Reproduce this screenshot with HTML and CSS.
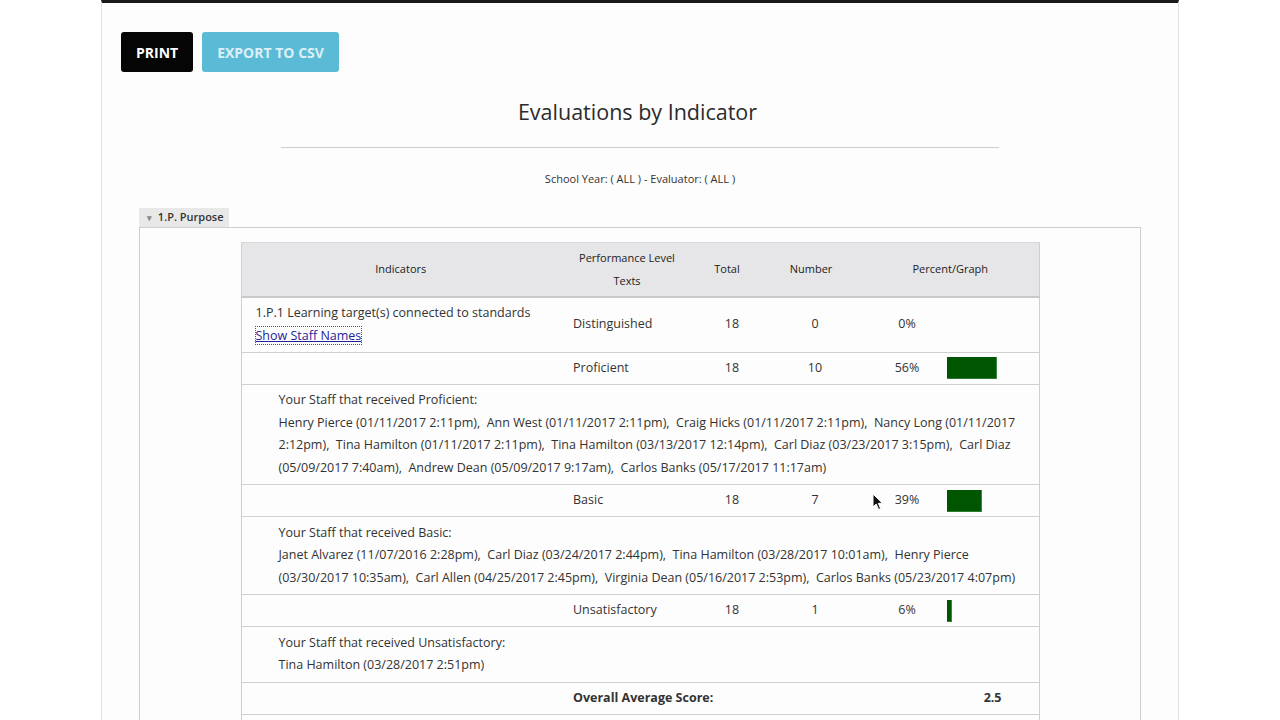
FILE: index.html
```html
<!DOCTYPE html>
<html lang="en">
<head>
<meta charset="utf-8">
<title>Evaluations by Indicator</title>
<link rel="stylesheet" href="styles.css">
</head>
<body>
<div class="page">
  <div class="actions">
    <button class="btn btn-print">PRINT</button>
    <button class="btn btn-export">EXPORT TO CSV</button>
  </div>
  <h1 class="title">Evaluations by Indicator</h1>
  <hr class="rule">
  <p class="filters">School Year: ( ALL ) - Evaluator: ( ALL )</p>

  <div class="group">
    <div class="group-tab"><span class="caret">&#9662;</span> 1.P. Purpose</div>
    <div class="group-body">
      <table class="report">
        <colgroup>
          <col class="c-ind"><col class="c-lvl"><col class="c-tot"><col class="c-num"><col class="c-pct">
        </colgroup>
        <thead>
          <tr>
            <th>Indicators</th>
            <th>Performance Level<br>Texts</th>
            <th>Total</th>
            <th>Number</th>
            <th>Percent/Graph</th>
          </tr>
        </thead>
        <tbody>
          <tr>
            <td class="ind">1.P.1 Learning target(s) connected to standards<br><a href="#" class="staff-link">Show Staff Names</a></td>
            <td class="lvl">Distinguished</td>
            <td class="tot">18</td>
            <td class="num">0</td>
            <td class="pct"><div class="pct-wrap"><span class="pct-val">0%</span></div></td>
          </tr>
          <tr>
            <td></td>
            <td class="lvl">Proficient</td>
            <td class="tot">18</td>
            <td class="num">10</td>
            <td class="pct"><div class="pct-wrap"><span class="pct-val">56%</span><span class="bar" style="width:50px"></span></div></td>
          </tr>
          <tr class="staff">
            <td colspan="5">Your Staff that received Proficient:<br>Henry Pierce (01/11/2017 2:11pm),&nbsp; Ann West (01/11/2017 2:11pm),&nbsp; Craig Hicks (01/11/2017 2:11pm),&nbsp; Nancy Long (01/11/2017 2:12pm),&nbsp; Tina Hamilton (01/11/2017 2:11pm),&nbsp; Tina Hamilton (03/13/2017 12:14pm),&nbsp; Carl Diaz (03/23/2017 3:15pm),&nbsp; Carl Diaz (05/09/2017 7:40am),&nbsp; Andrew Dean (05/09/2017 9:17am),&nbsp; Carlos Banks (05/17/2017 11:17am)</td>
          </tr>
          <tr>
            <td></td>
            <td class="lvl">Basic</td>
            <td class="tot">18</td>
            <td class="num">7</td>
            <td class="pct"><div class="pct-wrap"><span class="pct-val">39%</span><span class="bar" style="width:35px"></span></div></td>
          </tr>
          <tr class="staff">
            <td colspan="5">Your Staff that received Basic:<br>Janet Alvarez (11/07/2016 2:28pm),&nbsp; Carl Diaz (03/24/2017 2:44pm),&nbsp; Tina Hamilton (03/28/2017 10:01am),&nbsp; Henry Pierce (03/30/2017 10:35am),&nbsp; Carl Allen (04/25/2017 2:45pm),&nbsp; Virginia Dean (05/16/2017 2:53pm),&nbsp; Carlos Banks (05/23/2017 4:07pm)</td>
          </tr>
          <tr>
            <td></td>
            <td class="lvl">Unsatisfactory</td>
            <td class="tot">18</td>
            <td class="num">1</td>
            <td class="pct"><div class="pct-wrap"><span class="pct-val">6%</span><span class="bar" style="width:5px"></span></div></td>
          </tr>
          <tr class="staff">
            <td colspan="5">Your Staff that received Unsatisfactory:<br>Tina Hamilton (03/28/2017 2:51pm)</td>
          </tr>
          <tr class="overall">
            <td></td>
            <td colspan="3" class="lvl overall-label">Overall Average Score:</td>
            <td class="overall-val">2.5</td>
          </tr>
          <tr class="spacer">
            <td colspan="5"></td>
          </tr>
        </tbody>
      </table>
    </div>
  </div>
  <svg class="cursor" width="12" height="18" viewBox="0 0 12 18" aria-hidden="true">
    <path d="M1 1 L1 14 L4.2 11 L6.6 16.5 L8.6 15.6 L6.3 10.3 L10.5 10.3 Z" fill="#111" stroke="#fff" stroke-width="1"/>
  </svg>
</div>
</body>
</html>
```
FILE: styles.css
```css
* { box-sizing: border-box; }
html, body { margin: 0; padding: 0; }
body {
  background: #ffffff;
  font-family: "Open Sans", "Noto Sans", "Liberation Sans", sans-serif;
  color: #333;
}
.page {
  position: relative;
  width: 1078px;
  min-height: 720px;
  margin: 0 auto;
  background: #fdfdfd;
  border-top: 3px solid #1a1a1a;
  border-left: 1px solid #e2e2e2;
  border-right: 1px solid #e2e2e2;
  padding: 29px 0 0 19px;
}
.actions { display: flex; gap: 9px; }
.btn {
  height: 40px;
  border: none;
  border-radius: 3px;
  font-family: "Open Sans", "Liberation Sans", sans-serif;
  font-weight: 700;
  font-size: 14px;
  padding: 0 15px;
  cursor: pointer;
}
.btn-print { background: #050505; color: #fff; width: 72px; }
.btn-export { background: #5bbad5; color: #dcf0f7; width: 137px; }
.title {
  margin: 25px 0 0 -24px;
  text-align: center;
  font-weight: 400;
  font-size: 21.5px;
  line-height: 30px;
  color: #2b2b2b;
}
.rule {
  width: 718px;
  margin: 20px 0 0 160px;
  border: none;
  border-top: 1px solid #cfcfcf;
  height: 0;
}
.filters {
  margin: 23px 0 0 -19px;
  text-align: center;
  font-size: 11px;
  line-height: 16px;
  color: #333;
}
.group { margin: 17px 0 0 18px; width: 1002px; }
.group-tab {
  display: inline-block;
  background: #e8e8e8;
  font-size: 11px;
  font-weight: 600;
  line-height: 18px;
  padding: 0 5px 0 8px;
  color: #333;
}
.caret { color: #888; font-size: 9px; margin-right: 3px; }
.group-body {
  border: 1px solid #cfcfcf;
  border-bottom: none;
  padding-top: 14px;
  min-height: 500px;
}
.report {
  width: 798px;
  margin: 0 auto;
  border-collapse: collapse;
  table-layout: fixed;
  font-size: 12.5px;
  border-left: 1px solid #cfcfcf;
  border-right: 1px solid #cfcfcf;
}
.c-ind { width: 319px; }
.c-lvl { width: 134px; }
.c-tot { width: 66px; }
.c-num { width: 102px; }
.c-pct { width: 177px; }
.report thead th {
  background: #e6e6e8;
  font-size: 11px;
  font-weight: 500;
  line-height: 22.5px;
  padding: 4px 0 3.5px;
  color: #222;
  border-top: 1px solid #d8d8d8;
  border-bottom: 2px solid #c9c9c9;
  text-align: center;
}
.report td {
  line-height: 22.5px;
  padding: 4.25px 0 4.25px;
  border-bottom: 1px solid #d0d0d0;
  vertical-align: middle;
}
.report td.ind { padding-left: 14px; padding-top: 4.5px; padding-bottom: 4.5px; }
.staff-link {
  color: #1f1f99;
  text-decoration: underline;
  outline: 1px dotted #555;
}
.report td.lvl { padding-left: 13px; }
.report td.tot { text-align: center; padding-left: 10px; }
.report td.num { text-align: center; padding-left: 8px; }
.report td.pct { padding-left: 5px; }
.pct-wrap { display: flex; align-items: center; }
.pct-val { width: 80px; text-align: center; }
.bar {
  display: block;
  height: 22px;
  background: #005600;
  border-right: 1px solid #3a8a3a;
  border-bottom: 1px solid #2f7d2f;
}
.staff td { padding: 4.75px 20px 4.75px 37px; }
.overall-label { font-weight: 700; }
.overall-val { font-weight: 700; text-align: right; padding-right: 37px !important; }
.spacer td { height: 30px; border-bottom: none; }
.cursor { position: absolute; left: 770px; top: 490px; }
```
